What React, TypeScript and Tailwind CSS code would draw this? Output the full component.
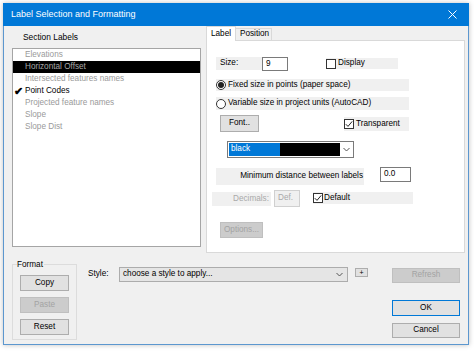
import React from "react";

function Check({ checked }: { checked?: boolean }) {
  return (
    <span className="w-[10px] h-[10px] border border-[#333333] bg-white flex items-center justify-center shrink-0">
      {checked && (
        <svg width="8" height="8" viewBox="0 0 8 8">
          <path d="M0.8 4.2 L3 6.4 L7.2 1.4" stroke="#222" strokeWidth="1" fill="none" />
        </svg>
      )}
    </span>
  );
}

function Radio({ on }: { on?: boolean }) {
  return (
    <span className="w-[10px] h-[10px] rounded-full border border-[#333333] bg-white flex items-center justify-center shrink-0">
      {on && <span className="w-[6px] h-[6px] rounded-full bg-[#222222]" />}
    </span>
  );
}

function Chevron() {
  return (
    <svg width="7" height="5" viewBox="0 0 7 5">
      <path d="M0.5 1 L3.5 4 L6.5 1" stroke="#555" strokeWidth="1" fill="none" />
    </svg>
  );
}

export default function App() {
  const items = [
    { t: "Elevations", c: "text-[#9a9a9a]" },
    { t: "Horizontal Offset", c: "text-[#a8a8a8] bg-black", sel: true },
    { t: "Intersected features names", c: "text-[#9a9a9a]" },
    { t: "Point Codes", c: "text-black", check: true },
    { t: "Projected feature names", c: "text-[#9a9a9a]" },
    { t: "Slope", c: "text-[#9a9a9a]" },
    { t: "Slope Dist", c: "text-[#9a9a9a]" },
  ];
  return (
    <div className="w-[474px] h-[351px] bg-white pt-[3px] pl-[3px] font-['Liberation_Sans',Arial,sans-serif] text-[8.2px] leading-none text-black overflow-hidden">
      <div className="w-[466px] h-[342px] border border-[#5c97cf] bg-[#f0f0f0] flex flex-col shadow-[0_0_5px_rgba(0,0,0,0.25)]">
        {/* Title bar */}
        <div className="h-[23px] -mx-px -mt-px bg-[#0078d7] flex items-center justify-between pl-[8px] pr-[12px] text-white text-[9px] shrink-0">
          <span>Label Selection and Formatting</span>
          <svg width="9" height="9" viewBox="0 0 9 9">
            <path d="M0.5 0.5 L8.5 8.5 M8.5 0.5 L0.5 8.5" stroke="#fff" strokeWidth="1" />
          </svg>
        </div>

        {/* Top area */}
        <div className="flex h-[228px] shrink-0">
          <div className="ml-[8px] w-[189px] flex flex-col">
            <div className="h-[22px] flex items-center pl-[11px] pt-[1px] text-[8.4px]">Section Labels</div>
            <div className="h-[199px] border border-[#a5a5a5] bg-white">
              {items.map((it) => (
                <div key={it.t} className={`h-[12px] flex items-center pl-[1px] ${it.c}`}>
                  <span className="w-[11px] text-[11px] text-black font-bold">{it.check ? "✔" : ""}</span>
                  <span>{it.t}</span>
                </div>
              ))}
            </div>
          </div>

          <div className="ml-[5px] w-[259px] flex flex-col">
            <div className="h-[15px] flex items-end">
              <div className="h-[15px] w-[30px] border border-b-0 border-[#d9d9d9] bg-white flex items-center pl-[4px] relative z-10">Label</div>
              <div className="h-[13px] w-[36px] border border-l-0 border-[#d9d9d9] bg-[#f0f0f0] flex items-center pl-[4px]">Position</div>
            </div>
            <div className="h-[213px] -mt-px border border-[#d9d9d9] bg-white flex flex-col">
              {/* Row 1 */}
              <div className="mt-[16px] flex items-start">
                <div className="ml-[9px] w-[46px] h-[13px] bg-[#f0f0f0] flex items-center pl-[4px]">Size:</div>
                <div className="w-[26px] h-[14px] border border-[#7a7a7a] bg-white flex items-center pl-[3px]">9</div>
                <div className="ml-[38px] mt-[1px] w-[72px] h-[11px] bg-[#f0f0f0] flex items-center gap-[2px]">
                  <Check />
                  <span>Display</span>
                </div>
              </div>
              {/* Row 2 */}
              <div className="mt-[8px] ml-[9px] w-[193px] h-[12px] bg-[#f0f0f0] flex items-center gap-[2px]">
                <Radio on />
                <span>Fixed size in points (paper space)</span>
              </div>
              {/* Row 3 */}
              <div className="mt-[6px] ml-[9px] w-[193px] h-[13px] bg-[#f0f0f0] flex items-center gap-[2px]">
                <Radio />
                <span>Variable size in project units (AutoCAD)</span>
              </div>
              {/* Row 4 */}
              <div className="mt-[5px] flex items-start">
                <div className="ml-[13px] w-[39px] h-[17px] bg-[#e1e1e1] border border-[#adadad] flex items-center pl-[8px]">Font..</div>
                <div className="ml-[85px] mt-[2px] w-[65px] h-[14px] bg-[#f0f0f0] flex items-center gap-[2px]">
                  <Check checked />
                  <span>Transparent</span>
                </div>
              </div>
              {/* Row 5 */}
              <div className="mt-[9px] ml-[20px] w-[127px] h-[17px] border border-[#7a7a7a] bg-white flex items-center p-[1px]">
                <div className="w-[51px] h-full bg-[#0078d7] text-white flex items-center pl-[2px]">black</div>
                <div className="w-[60px] h-full bg-black" />
                <div className="flex-1 flex items-center justify-center">
                  <Chevron />
                </div>
              </div>
              {/* Row 6 */}
              <div className="mt-[9px] flex items-start">
                <div className="ml-[9px] mt-[1px] w-[148px] h-[17px] bg-[#f0f0f0] flex items-center justify-end pr-[1px]">Minimum distance between labels</div>
                <div className="ml-[16px] w-[31px] h-[15px] border border-[#7a7a7a] bg-white flex items-center pl-[3px]">0.0</div>
              </div>
              {/* Row 7 */}
              <div className="mt-[5px] flex items-start">
                <div className="ml-[5px] mt-[2px] w-[59px] h-[14px] bg-[#f0f0f0] flex items-center justify-end pr-[2px] text-[#a9a9a9]">Decimals:</div>
                <div className="ml-[3px] w-[26px] h-[17px] border border-[#d0d0d0] bg-[#f0f0f0] flex items-center pl-[3px] text-[#a9a9a9]">Def.</div>
                <div className="ml-[13px] mt-[2px] w-[100px] h-[12px] bg-[#f0f0f0] flex items-center gap-[1px]">
                  <Check checked />
                  <span>Default</span>
                </div>
              </div>
              {/* Row 8 */}
              <div className="mt-[15px] ml-[13px] w-[43px] h-[16px] bg-[#cccccc] border border-[#bfbfbf] flex items-center justify-center text-[#a3a3a3]">Options...</div>
            </div>
          </div>
        </div>

        {/* Bottom area */}
        <div className="flex items-start">
          <div className="ml-[8px] mt-[10px] w-[65px] h-[76px] border border-[#dcdcdc] relative flex flex-col">
            <span className="absolute left-[4px] -top-[4px] bg-[#f0f0f0] pr-[1px]">Format</span>
            <div className="ml-[7px] mt-[10px] w-[49px] h-[16px] bg-[#e1e1e1] border border-[#adadad] flex items-center justify-center">Copy</div>
            <div className="ml-[7px] mt-[6px] w-[49px] h-[16px] bg-[#cccccc] border border-[#bfbfbf] flex items-center justify-center text-[#a3a3a3]">Paste</div>
            <div className="ml-[7px] mt-[6px] w-[49px] h-[16px] bg-[#e1e1e1] border border-[#adadad] flex items-center justify-center">Reset</div>
          </div>

          <div className="ml-[11px] mt-[13px] flex items-start">
            <div className="w-[31px] h-[14px] flex items-center">Style:</div>
            <div className="w-[229px] h-[15px] bg-[#e5e5e5] border border-[#acacac] flex items-center justify-between pl-[3px] pr-[4px]">
              <span>choose a style to apply...</span>
              <Chevron />
            </div>
            <div className="ml-[7px] mt-[1px] w-[13px] h-[9px] bg-[#e1e1e1] border border-[#adadad] flex items-center justify-center text-[7px]">+</div>
          </div>

          <div className="ml-[24px] mt-[14px] w-[68px] flex flex-col">
            <div className="h-[15px] bg-[#cccccc] border border-[#bfbfbf] flex items-center justify-center text-[#a3a3a3]">Refresh</div>
            <div className="mt-[17px] h-[16px] bg-[#e1e1e1] border border-[#0078d7] flex items-center justify-center">OK</div>
            <div className="mt-[7px] h-[15px] bg-[#e1e1e1] border border-[#adadad] flex items-center justify-center">Cancel</div>
          </div>
        </div>
      </div>
    </div>
  );
}
